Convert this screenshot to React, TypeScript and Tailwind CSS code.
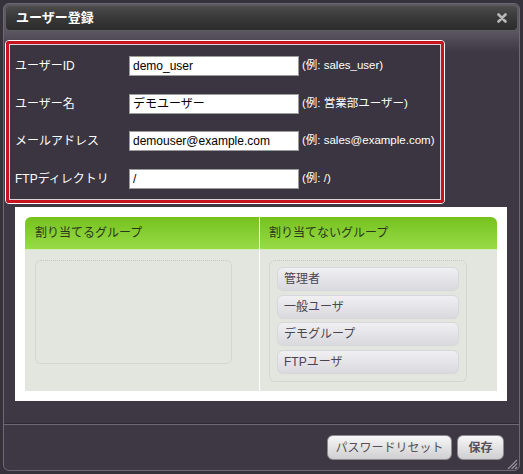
import React from 'react'

const font = { fontFamily: '"Liberation Sans", "Noto Sans CJK JP", sans-serif' }

interface FieldRow {
  label: string
  value: string
  hint: string
}

const fields: FieldRow[] = [
  { label: 'ユーザーID', value: 'demo_user', hint: '(例: sales_user)' },
  { label: 'ユーザー名', value: 'デモユーザー', hint: '(例: 営業部ユーザー)' },
  { label: 'メールアドレス', value: 'demouser@example.com', hint: '(例: sales@example.com)' },
  { label: 'FTPディレクトリ', value: '/', hint: '(例: /)' },
]

const groups = ['管理者', '一般ユーザ', 'デモグループ', 'FTPユーザ']

function CloseIcon() {
  return (
    <svg width="10" height="10" viewBox="0 0 10 10">
      <path d="M1.5 1.5 L8.5 8.5 M8.5 1.5 L1.5 8.5" stroke="#b9b9b9" strokeWidth="2.6" strokeLinecap="round" />
    </svg>
  )
}

function ResizeGrip() {
  return (
    <svg width="11" height="11" viewBox="0 0 11 11">
      <path d="M10 1 L1 10 M10 4.5 L4.5 10 M10 8 L8 10" stroke="#9a969e" strokeWidth="1.2" />
    </svg>
  )
}

export default function App() {
  return (
    <div className="w-[523px] h-[474px] bg-[#36323b] p-[3px]" style={font}>
      <div className="h-full flex flex-col rounded-[6px] border border-[#6e6973] bg-[linear-gradient(to_bottom,#5a5560_28px,#3d3844_48px)] overflow-hidden">
        {/* Title bar */}
        <div className="mx-[1px] mt-[1px] h-[26px] shrink-0 rounded-[5px] border border-[#5e5e5e] bg-[linear-gradient(to_bottom,#4c4c4c,#383838_50%,#2c2c2c)] flex items-center justify-between pl-[10px] pr-[10px]">
          <span className="text-[13px] font-bold text-white">ユーザー登録</span>
          <CloseIcon />
        </div>

        {/* Form box */}
        <div className="ml-[1px] mt-[9px] w-[440px] h-[164px] rounded-[4px] border border-white">
          <div className="h-full rounded-[3px] border-[3px] border-[#c8141e]">
            <div className="h-full border border-[#d8d6da] bg-[#3a3540] pl-[5px] pt-[11px] flex flex-col gap-[17.5px]">
              {fields.map((f) => (
                <div key={f.label} className="flex items-center h-[20px] whitespace-nowrap">
                  <span className="w-[114px] shrink-0 text-[12px] text-white">{f.label}</span>
                  <div className="w-[170px] shrink-0 h-[20px] bg-white border border-[#9c9c9c] flex items-center pl-[3px] text-[12px] text-black">
                    {f.value}
                  </div>
                  <span className="ml-[3px] text-[11.5px] text-white">{f.hint}</span>
                </div>
              ))}
            </div>
          </div>
        </div>

        {/* Group assignment panel */}
        <div className="ml-[11px] mr-[12px] mt-[3px] bg-white p-[10px]">
          <div className="flex flex-col">
            <div className="flex h-[33px] rounded-t-[6px] bg-[linear-gradient(to_bottom,#76c11e,#97dc47)] border-b border-[#d6ecbf] overflow-hidden">
              <div className="w-[235px] flex items-center pl-[10px] text-[12px] text-[#2b3620] border-r border-white">
                割り当てるグループ
              </div>
              <div className="flex-1 flex items-center pl-[9px] text-[12px] text-[#2b3620]">
                割り当てないグループ
              </div>
            </div>
            <div className="flex h-[141px] bg-[#e3e6de]">
              <div className="w-[235px] border-r border-white pl-[10px] pt-[10px]">
                <div className="w-[197px] h-[104px] rounded-[6px] border border-dotted border-[#c4c7bf]" />
              </div>
              <div className="flex-1 pl-[9px] pt-[10px]">
                <div className="w-[198px] rounded-[6px] border border-dotted border-[#c4c7bf] px-[7px] pt-[6px] pb-[7px] flex flex-col gap-[3.5px]">
                  {groups.map((g) => (
                    <div
                      key={g}
                      className="h-[24px] rounded-[6px] border border-[#d6d6dc] bg-[linear-gradient(to_bottom,#f0f0f3,#d9d9de)] flex items-center pl-[6px] text-[12px] text-[#4a4552]"
                    >
                      {g}
                    </div>
                  ))}
                </div>
              </div>
            </div>
          </div>
        </div>

        <div className="flex-1" />

        {/* Footer */}
        <div className="border-t border-[#6d6872] shadow-[0_-1px_0_#2e2a33]" />
        <div className="relative flex justify-end gap-[5px] pt-[10px] pb-[10px] pr-[15px]">
          <button className="w-[125px] h-[25px] rounded-[6px] border border-[#8d8b90] bg-[linear-gradient(to_bottom,#f7f7f7,#cfcfd1)] text-[12px] text-[#555059]">
            パスワードリセット
          </button>
          <button className="w-[47px] h-[25px] rounded-[6px] border border-[#8d8b90] bg-[linear-gradient(to_bottom,#f7f7f7,#cfcfd1)] text-[12px] font-bold text-[#555059]">
            保存
          </button>
          <div className="absolute right-[1px] bottom-[0px]">
            <ResizeGrip />
          </div>
        </div>
      </div>
    </div>
  )
}
